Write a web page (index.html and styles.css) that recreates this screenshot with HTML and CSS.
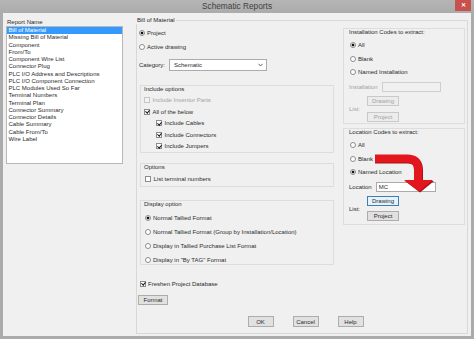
FILE: index.html
```html
<!DOCTYPE html>
<html lang="en">
<head>
  <meta charset="UTF-8" />
  <meta name="viewport" content="width=device-width, initial-scale=1" />
  <title>Schematic Reports</title>
  <link rel="stylesheet" href="styles.css">
</head>
<body>
  <div class="window">
    <div class="titlebar">
      <span></span>
      <span class="title">Schematic Reports</span>
      <span class="close">&#x2715;</span>
    </div>

    <div class="client">
      <div class="reports">
        <div class="caption">Report Name</div>
        <ul class="report-list">
          <li class="selected">Bill of Material</li>
          <li>Missing Bill of Material</li>
          <li>Component</li>
          <li>From/To</li>
          <li>Component Wire List</li>
          <li>Connector Plug</li>
          <li>PLC I/O Address and Descriptions</li>
          <li>PLC I/O Component Connection</li>
          <li>PLC Modules Used So Far</li>
          <li>Terminal Numbers</li>
          <li>Terminal Plan</li>
          <li>Connector Summary</li>
          <li>Connector Details</li>
          <li>Cable Summary</li>
          <li>Cable From/To</li>
          <li>Wire Label</li>
        </ul>
      </div>

      <fieldset class="bom">
        <legend>Bill of Material</legend>
        <div class="cols">
          <div class="col-left">
            <div class="row first"><span class="radio on"></span>Project</div>
            <div class="row"><span class="radio"></span>Active drawing</div>
            <div class="category">
              <span>Category:</span>
              <div class="select">
                <span>Schematic</span>
                <svg width="5" height="4" viewBox="0 0 5 4"><path d="M0.5 0.8 L2.5 3 L4.5 0.8" fill="none" stroke="#555" stroke-width="0.9"/></svg>
              </div>
            </div>

            <div class="box include">
              <div class="box-title">Include options</div>
              <div class="item first disabled"><span class="check"></span>Include Inventor Parts</div>
              <div class="item"><span class="check on"></span>All of the below</div>
              <div class="item sub"><span class="check on"></span>Include Cables</div>
              <div class="item sub"><span class="check on"></span>Include Connectors</div>
              <div class="item sub"><span class="check on"></span>Include Jumpers</div>
            </div>

            <div class="box options">
              <div class="box-title">Options</div>
              <div class="item first"><span class="check"></span>List terminal numbers</div>
            </div>

            <div class="box display">
              <div class="box-title">Display option</div>
              <div class="row first"><span class="radio on"></span>Normal Tallied Format</div>
              <div class="row"><span class="radio"></span>Normal Tallied Format (Group by Installation/Location)</div>
              <div class="row"><span class="radio"></span>Display in Tallied Purchase List Format</div>
              <div class="row"><span class="radio"></span>Display in "By TAG" Format</div>
            </div>
          </div>

          <div class="col-right">
            <div class="box codes install">
              <div class="box-title">Installation Codes to extract:</div>
              <div class="code-row first"><span class="radio on"></span>All</div>
              <div class="code-row"><span class="radio"></span>Blank</div>
              <div class="code-row"><span class="radio"></span>Named Installation</div>
              <div class="field disabled">
                <span>Installation</span>
                <span class="input"></span>
              </div>
              <div class="list-pick disabled">
                <span class="list-label">List:</span>
                <button class="btn">Drawing</button>
                <button class="btn">Project</button>
              </div>
            </div>

            <div class="box codes location">
              <div class="box-title">Location Codes to extract:</div>
              <div class="code-row first"><span class="radio"></span>All</div>
              <div class="code-row"><span class="radio"></span>Blank</div>
              <div class="code-row"><span class="radio on"></span>Named Location</div>
              <div class="field">
                <span>Location</span>
                <span class="input">MC</span>
              </div>
              <div class="list-pick">
                <span class="list-label">List:</span>
                <button class="btn focus">Drawing</button>
                <button class="btn">Project</button>
              </div>
              <svg class="arrow" width="122" height="97" viewBox="0 0 122 97">
                <path d="M31 30.5 H64 Q75 30.5 75 41.5 V53" fill="none" stroke="#a51318" stroke-width="8"/>
                <polygon points="61,52 90,52 76,63.5" fill="#a51318"/>
                <path d="M31 29.5 H63 Q74 29.5 74 40.5 V52" fill="none" stroke="#e3161d" stroke-width="8"/>
                <polygon points="60,51 89,51 75,62.5" fill="#e3161d"/>
              </svg>
            </div>
          </div>
        </div>

        <div class="footer">
          <div class="item freshen"><span class="check on"></span>Freshen Project Database</div>
          <button class="btn format">Format</button>
          <div class="actions">
            <button class="btn">OK</button>
            <button class="btn">Cancel</button>
            <button class="btn">Help</button>
          </div>
        </div>
      </fieldset>
    </div>
  </div>
</body>
</html>
```

FILE: styles.css
```css
* {
  box-sizing: border-box;
}

body {
  margin: 0;
  font-family: "Liberation Sans", Arial, sans-serif;
  font-size: 6px;
  color: #2b2b2b;
  background: #ababab;
}

.window {
  width: 474px;
  height: 339px;
  background: #ababab;
}

/* title bar */
.titlebar {
  height: 13px;
  display: grid;
  grid-template-columns: 1fr auto 1fr;
  align-items: start;
  background: linear-gradient(#b5b5b5, #ababab);
}

.title {
  font-size: 8.3px;
  line-height: 13px;
  color: #404040;
}

.close {
  justify-self: end;
  width: 16px;
  height: 11px;
  margin-right: 3px;
  background: #c8504d;
  color: #fff;
  font-size: 6px;
  font-weight: bold;
  line-height: 11px;
  text-align: center;
}

.client {
  height: 323px;
  margin: 0 3px;
  background: #f0f0f0;
  display: flex;
}

/* report list */
.reports {
  width: 133px;
  padding: 6px 0 0 3px;
}

.caption {
  line-height: 6px;
  padding-left: 1px;
}

.report-list {
  list-style: none;
  margin: 1px 0 0;
  padding: 0;
  width: 117px;
  height: 138px;
  background: #fff;
  border: 1px solid #b8b8b8;
}

.report-list li {
  line-height: 7.25px;
  padding-left: 1.5px;
  white-space: nowrap;
}

.report-list li.selected {
  background: #3399ff;
  color: #fff;
}

/* main group */
.bom {
  margin: 3.5px 0 0;
  padding: 0 2px;
  width: 332px;
  height: 317px;
  min-width: 0;
  border: 1px solid #d8d8d8;
}

.bom legend {
  padding: 0 1px;
  margin-left: -3px;
  line-height: 7px;
}

.cols {
  display: flex;
  align-items: flex-start;
}

.col-left {
  width: 196px;
}

.col-right {
  width: 122px;
  margin-left: 8px;
}

.row {
  height: 14px;
  display: flex;
  align-items: center;
  white-space: nowrap;
}

.col-left > .row.first {
  margin-top: 2.5px;
}

.radio {
  width: 6px;
  height: 6px;
  border: 1px solid #8c8c8c;
  border-radius: 50%;
  background: #fff;
  margin-right: 2px;
  flex: none;
}

.radio.on {
  background: radial-gradient(circle, #111 0 1.2px, #fff 1.7px);
}

.check {
  width: 6px;
  height: 6px;
  border: 1px solid #8c8c8c;
  background: #fff;
  margin-right: 2.5px;
  flex: none;
  display: inline-grid;
  place-items: center;
}

.check.on::after {
  content: "";
  width: 1.6px;
  height: 3.2px;
  margin-top: -1px;
  border: solid #111;
  border-width: 0 1.1px 1.1px 0;
  transform: rotate(40deg);
}

.category {
  margin-top: 5px;
  height: 12px;
  display: flex;
  align-items: center;
  gap: 3px;
}

.select {
  width: 98px;
  height: 12px;
  margin-left: 1px;
  padding: 0 3px 0 4px;
  background: #fff;
  border: 1px solid #acacac;
  display: flex;
  align-items: center;
  justify-content: space-between;
}

/* group boxes */
.box {
  border: 1px solid #dddddd;
  padding-left: 3px;
}

.box-title {
  line-height: 7px;
}

.include {
  margin: 14px 0 0 1px;
  width: 194px;
  height: 68px;
}

.item {
  height: 11.5px;
  display: flex;
  align-items: center;
  white-space: nowrap;
}

.include .item.first {
  margin-top: 1.5px;
}

.item.sub {
  padding-left: 12px;
}

.item.disabled {
  color: #a3a3a3;
}

.item.disabled .check {
  border-color: #c6c6c6;
  background: #f4f4f4;
}

.options {
  margin: 10px 0 0 1px;
  width: 194px;
  height: 24px;
}

.options .item.first {
  margin-top: 2px;
  padding-left: 1px;
}

.display {
  margin: 13px 0 0 1px;
  width: 194px;
  height: 65px;
}

.display .row.first {
  margin-top: 3px;
}

.display .radio {
  margin-left: 1px;
}

/* right column */
.codes {
  padding-left: 5px;
  position: relative;
}

.install {
  margin-top: 4.5px;
  height: 96px;
}

.location {
  margin-top: 4px;
  height: 97px;
}

.code-row {
  height: 13.5px;
  display: flex;
  align-items: center;
}

.code-row.first {
  margin-top: 2.5px;
}

.code-row .radio {
  margin-left: 1px;
}

.field {
  margin-top: 3.25px;
  height: 10px;
  display: flex;
  align-items: center;
  gap: 4px;
}

.input {
  height: 10px;
  width: 60px;
  background: #fff;
  border: 1px solid #aaaaaa;
  padding-left: 2px;
  line-height: 8px;
}

.install .input {
  width: 59px;
}

.list-pick {
  margin-top: 4px;
  display: grid;
  grid-template-columns: 18px 32px;
  row-gap: 5px;
  align-items: center;
}

.install .list-pick {
  row-gap: 6px;
}

.list-label {
  grid-row: 1 / 3;
}

.disabled {
  color: #a3a3a3;
}

.disabled .input {
  border-color: #cfcfcf;
  background: #f0f0f0;
}

.btn {
  height: 10px;
  padding: 0;
  font-family: inherit;
  font-size: 6px;
  line-height: 8px;
  color: #2b2b2b;
  background: #e1e1e1;
  border: 1px solid #adadad;
  border-radius: 0;
}

.disabled .btn {
  color: #a3a3a3;
  background: #ececec;
  border-color: #c9c9c9;
}

.btn.focus {
  background: #e5f1fb;
  border-color: #3c7fb1;
}

.arrow {
  position: absolute;
  left: 0;
  top: 0;
  overflow: visible;
}

/* footer */
.footer {
  padding-left: 1px;
}

.freshen {
  margin-top: 14px;
  height: 10px;
}

.freshen .check {
  margin-right: 2px;
}

.format {
  display: block;
  margin: 6px 0 0 -2px;
  width: 30px;
}

.actions {
  margin-top: 11px;
  padding-left: 6px;
  display: flex;
  justify-content: center;
  gap: 19px;
}

.actions .btn {
  width: 26px;
  height: 11px;
}
```
